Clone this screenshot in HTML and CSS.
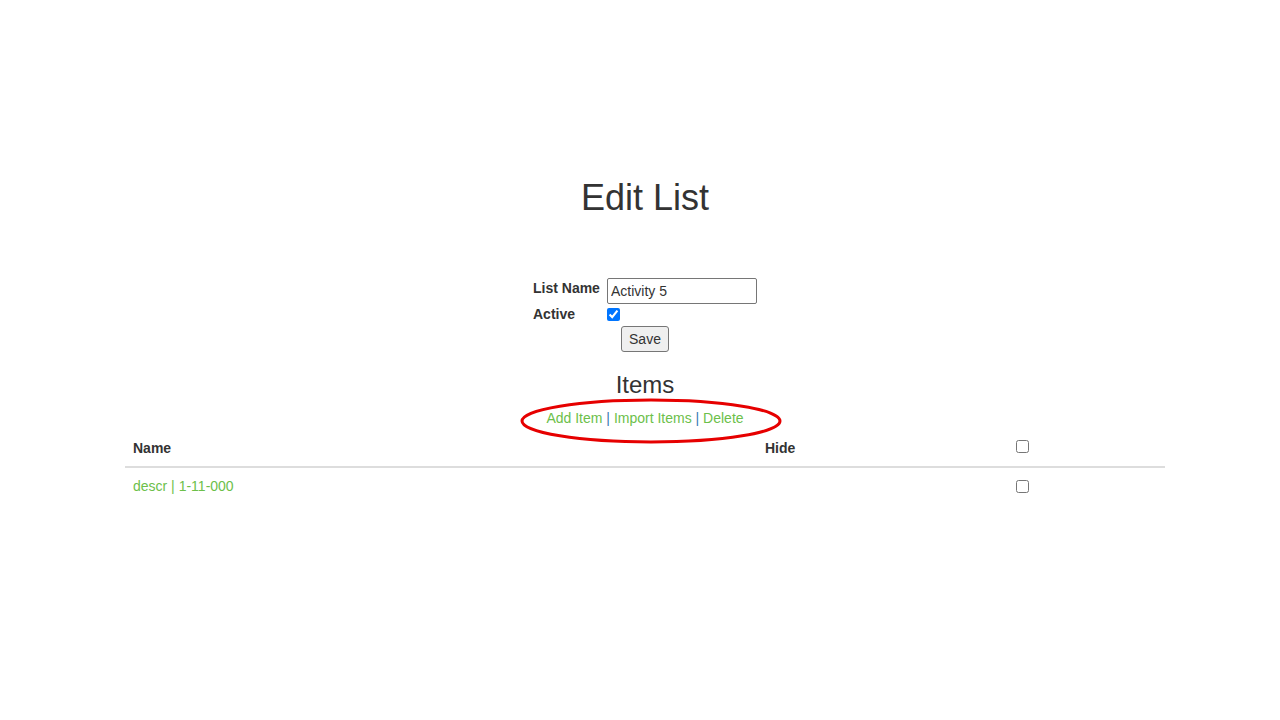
FILE: index.html
```html
<!DOCTYPE html>
<html lang="en">
<head>
    <meta charset="UTF-8">
    <meta name="viewport" content="width=device-width, initial-scale=1.0">
    <title>Edit List</title>
    <link rel="stylesheet" href="styles.css">
</head>
<body>
    <div class="container">
        <h1>Edit List</h1>

        <form class="list-form">
            <label class="form-label" for="listName">List Name</label>
            <input class="form-input" type="text" id="listName" value="Activity 5">
            <label class="form-label" for="active">Active</label>
            <div class="check-cell"><input type="checkbox" id="active" class="check" checked></div>
            <div class="save-row"><button type="button" class="save-btn">Save</button></div>
        </form>

        <h3 class="items-title">Items</h3>
        <div class="item-links">
            <a href="#">Add Item</a> <span class="sep">|</span> <a href="#">Import Items</a> <span class="sep">|</span> <a href="#">Delete</a>
        </div>

        <table class="items-table">
            <thead>
                <tr>
                    <th class="col-name">Name</th>
                    <th class="col-hide">Hide</th>
                    <th class="col-check"><input type="checkbox" class="check"></th>
                </tr>
            </thead>
            <tbody>
                <tr>
                    <td><a href="#">descr | 1-11-000</a></td>
                    <td></td>
                    <td><input type="checkbox" class="check"></td>
                </tr>
            </tbody>
        </table>
    </div>

    <!-- annotation drawn over the links -->
    <svg class="annotation" width="268" height="52" viewBox="0 0 268 52">
        <ellipse cx="134" cy="26" rx="129" ry="21" fill="none" stroke="#e60000" stroke-width="3"/>
    </svg>
</body>
</html>
```

FILE: styles.css
```css
body {
    font-family: "Liberation Sans", Arial, sans-serif;
    font-size: 14px;
    line-height: 20px;
    color: #333;
    margin: 0;
    background: #fff;
}
.container {
    width: 1040px;
    margin-left: 125px;
    padding-top: 178px;
}
h1 {
    font-size: 36px;
    font-weight: normal;
    line-height: 40px;
    text-align: center;
    margin: 0 0 60px 0;
}
.list-form {
    display: grid;
    grid-template-columns: 74px 150px;
    width: 224px;
    margin: 0 auto;
}
.form-label {
    font-weight: bold;
    align-self: start;
}
.form-input {
    box-sizing: border-box;
    width: 150px;
    height: 26px;
    margin: 0;
    padding: 1px 3px;
    border: 1px solid #767676;
    border-radius: 2px;
    font-family: "Liberation Sans", Arial, sans-serif;
    font-size: 14px;
    color: #333;
}
.check-cell {
    height: 22px;
}
.check {
    width: 13px;
    height: 13px;
    margin: 4px 0 0 0;
    accent-color: #0075ff;
}
.save-row {
    grid-column: 1 / 3;
    text-align: center;
}
.save-btn {
    box-sizing: border-box;
    height: 26px;
    width: 48px;
    padding: 0;
    background: #efefef;
    border: 1px solid #767676;
    border-radius: 3px;
    font-family: "Liberation Sans", Arial, sans-serif;
    font-size: 14px;
    color: #333;
}
.items-title {
    font-size: 24px;
    font-weight: normal;
    line-height: 26px;
    text-align: center;
    margin: 20px 0 10px 0;
}
.item-links {
    text-align: center;
    margin-bottom: 2px;
}
a {
    color: #6cc04a;
    text-decoration: none;
}
.sep {
    color: #3a78b4;
}
.items-table {
    width: 1040px;
    border-collapse: collapse;
}
.items-table th {
    text-align: left;
    padding: 8px;
    border-bottom: 2px solid #ddd;
    line-height: 20px;
}
.items-table td {
    padding: 8px;
    line-height: 20px;
}
.col-name {
    width: 616px;
}
.col-hide {
    width: 231px;
}
.items-table th .check {
    margin: 2px 0 0 4px;
    vertical-align: top;
}
.items-table td .check {
    margin: -2px 0 0 4px;
    vertical-align: middle;
}
.annotation {
    position: absolute;
    left: 517px;
    top: 395px;
}
```
